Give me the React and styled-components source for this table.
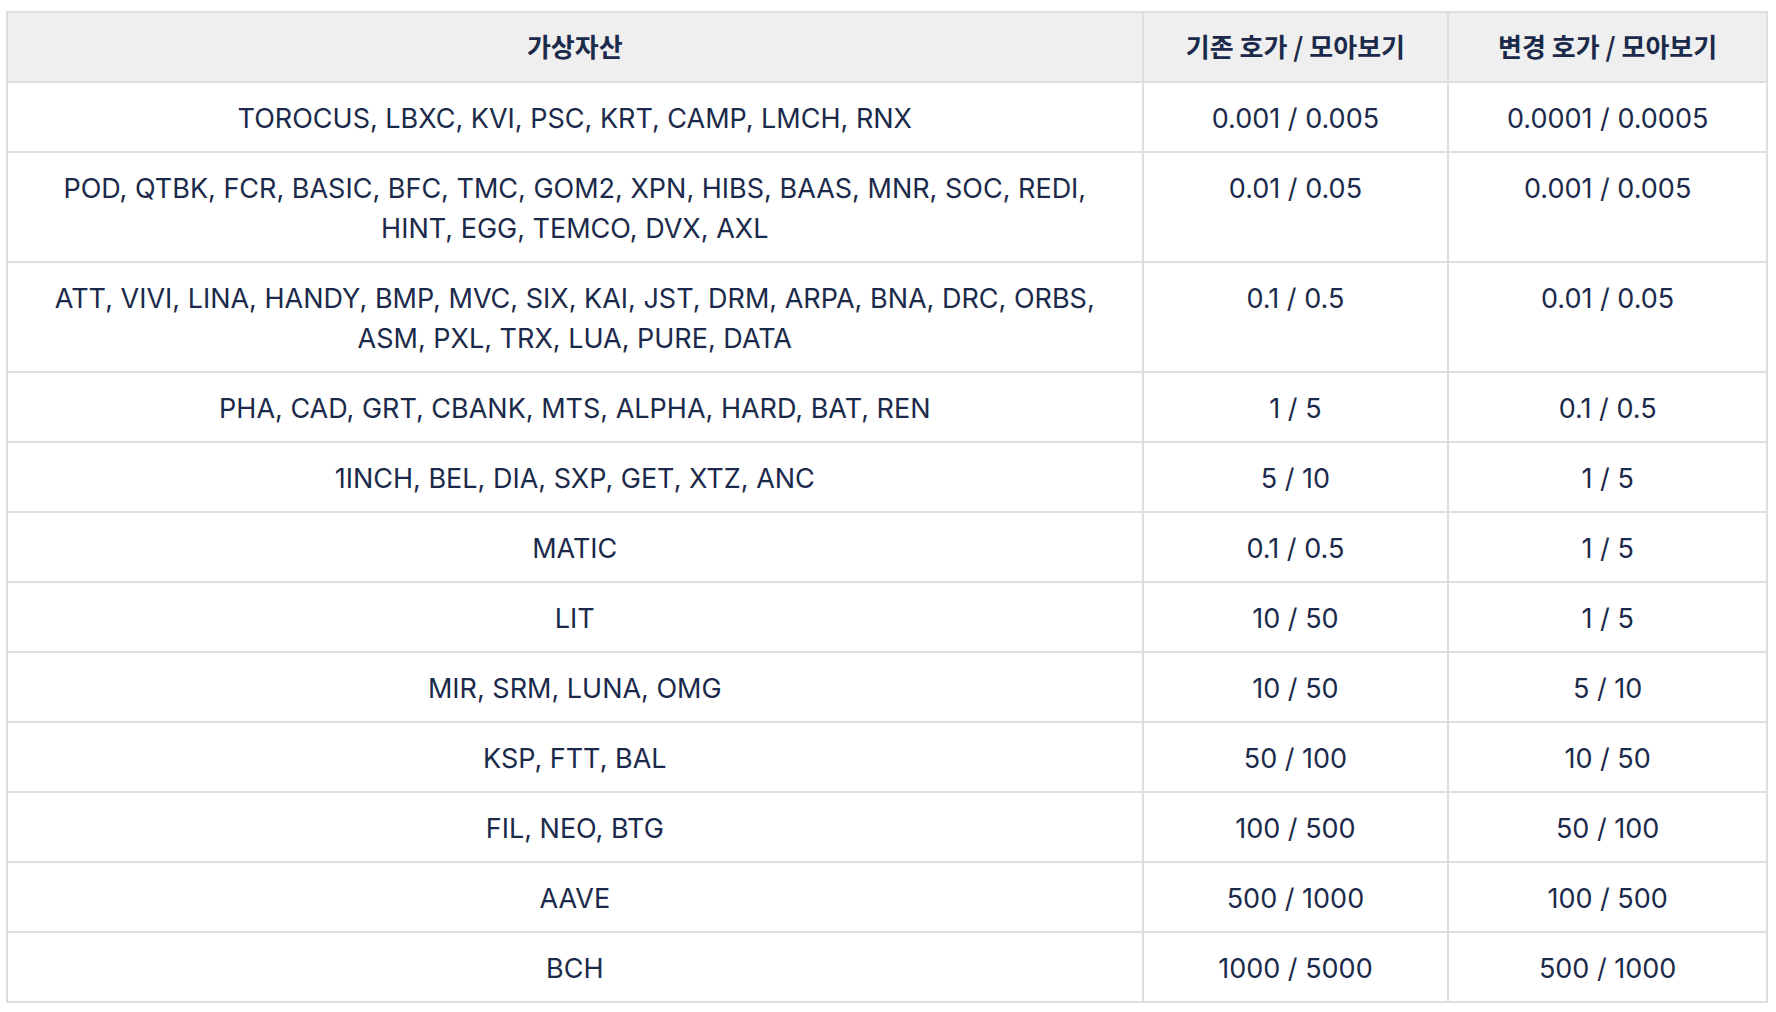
import React from "react";
import styled, { createGlobalStyle } from "styled-components";

const GlobalStyle = createGlobalStyle`
  body {
    margin: 0;
    background: #ffffff;
    font-family: Inter, "Noto Sans CJK KR", sans-serif;
  }
`;

const Wrapper = styled.div`
  padding: 11px 8px 10px 6px;
`;

const Table = styled.table`
  width: 1762px;
  border-collapse: collapse;
  border: 2px solid #dedede;
  color: #1b2a4a;
  text-align: center;
`;

const Col = styled.col`
  width: ${(props) => props.$width}px;
`;

const HeadCell = styled.th`
  border: 2px solid #dedede;
  background: #efefef;
  padding: 13px 16px 15px;
  font-family: "Noto Sans CJK KR", Inter, sans-serif;
  font-size: 26px;
  font-weight: 700;
  line-height: 40px;
`;

const Cell = styled.td`
  border: 2px solid #dedede;
  padding: 16px 16px 12px;
  font-size: 27px;
  line-height: 40px;
  vertical-align: top;
`;

const rows = [
  ["TOROCUS, LBXC, KVI, PSC, KRT, CAMP, LMCH, RNX", "0.001 / 0.005", "0.0001 / 0.0005"],
  [
    "POD, QTBK, FCR, BASIC, BFC, TMC, GOM2, XPN, HIBS, BAAS, MNR, SOC, REDI, HINT, EGG, TEMCO, DVX, AXL",
    "0.01 / 0.05",
    "0.001 / 0.005",
  ],
  [
    "ATT, VIVI, LINA, HANDY, BMP, MVC, SIX, KAI, JST, DRM, ARPA, BNA, DRC, ORBS, ASM, PXL, TRX, LUA, PURE, DATA",
    "0.1 / 0.5",
    "0.01 / 0.05",
  ],
  ["PHA, CAD, GRT, CBANK, MTS, ALPHA, HARD, BAT, REN", "1 / 5", "0.1 / 0.5"],
  ["1INCH, BEL, DIA, SXP, GET, XTZ, ANC", "5 / 10", "1 / 5"],
  ["MATIC", "0.1 / 0.5", "1 / 5"],
  ["LIT", "10 / 50", "1 / 5"],
  ["MIR, SRM, LUNA, OMG", "10 / 50", "5 / 10"],
  ["KSP, FTT, BAL", "50 / 100", "10 / 50"],
  ["FIL, NEO, BTG", "100 / 500", "50 / 100"],
  ["AAVE", "500 / 1000", "100 / 500"],
  ["BCH", "1000 / 5000", "500 / 1000"],
];

const App = () => {
  return (
    <Wrapper>
      <GlobalStyle />
      <Table>
        <colgroup>
          <Col $width={1137} />
          <Col $width={306} />
          <Col $width={319} />
        </colgroup>
        <thead>
          <tr>
            <HeadCell>가상자산</HeadCell>
            <HeadCell>기존 호가 / 모아보기</HeadCell>
            <HeadCell>변경 호가 / 모아보기</HeadCell>
          </tr>
        </thead>
        <tbody>
          {rows.map((row, i) => (
            <tr key={i}>
              <Cell>{row[0]}</Cell>
              <Cell>{row[1]}</Cell>
              <Cell>{row[2]}</Cell>
            </tr>
          ))}
        </tbody>
      </Table>
    </Wrapper>
  );
};

export default App;
